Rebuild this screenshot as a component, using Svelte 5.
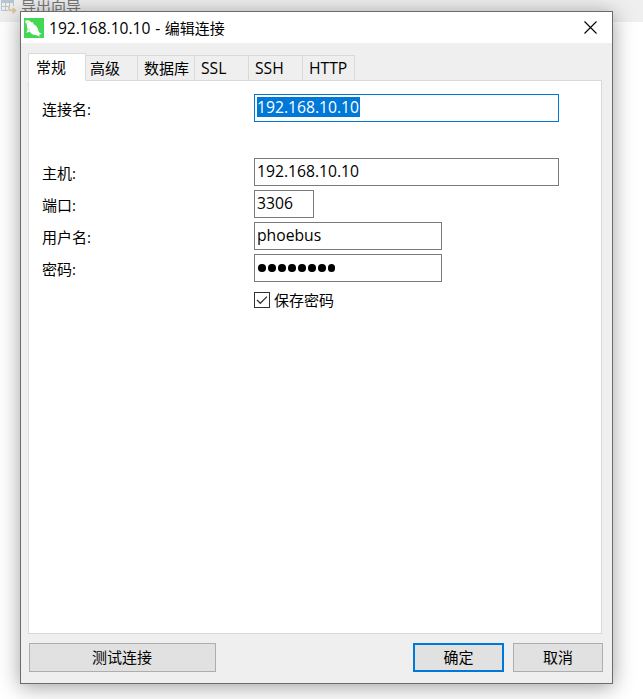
<script>
  const tabs = [
    { id: 'general', label: '常规', width: 58 },
    { id: 'advanced', label: '高级', width: 52 },
    { id: 'databases', label: '数据库', width: 57 },
    { id: 'ssl', label: 'SSL', width: 54, latin: true },
    { id: 'ssh', label: 'SSH', width: 54, latin: true },
    { id: 'http', label: 'HTTP', width: 52, latin: true }
  ];
  const host = '192.168.10.10';
  const passwordLength = 8;

  let active = 'general';
  let savePassword = true;
</script>

<div class="desktop">
  <div class="toolbar">
    <svg class="wizard-icon" width="17" height="14" viewBox="0 0 17 14">
      <rect x="1" y="0" width="13" height="2" fill="#b9c7d3" />
      <path d="M1.500 0v10.500h7M5.500 0v10.500M9.500 0v7M13.500 0v6M1 2.500h13M1 6.500h9" fill="none" stroke="#b5c4d0" />
      <path d="M9 6v2.500q0 2 3 2h2.500M12.500 8l2.800 2.500-2.800 2.500" fill="none" stroke="#dec39b" stroke-width="1.700" />
    </svg>
    <span>导出向导</span>
  </div>

  <div class="dialog" role="dialog" aria-label="编辑连接">
    <header>
      <svg class="logo" width="20" height="20" viewBox="0 0 20 20">
        <rect width="20" height="20" fill="#43d854" />
        <path
          d="M1.300 2.700C3 1.700 5.600 2.100 7.200 4.200l2.300.3-.4 1.300c2.800 1.500 4.700 3.800 5.300 6.700.1 1.300.8 2.200 3.400 3.400l-2.500.5.200 2.400c-1.300-1.200-2.600-1.700-4.200-1.800-2.500-.3-4.700-1.600-5.800-3.600L2.300 15l1.400-3.500C2.800 9.300 3.300 7.400 2.500 5.700L1.300 4.200z"
          fill="#fff"
        />
        <path d="M4.600 10.500l1.200 2.200M2.600 4.600l1.900.4" fill="none" stroke="#8be795" stroke-width=".7" />
      </svg>
      <h1><span class="host">{host} -</span> 编辑连接</h1>
      <button class="close" aria-label="关闭">
        <svg width="13" height="13" viewBox="0 0 13 13">
          <path d="M.5.500l12 12M12.500.500l-12 12" fill="none" stroke="#000" stroke-width="1.100" />
        </svg>
      </button>
    </header>

    <div class="tabs" role="tablist">
      {#each tabs as tab}
        <button
          class="tab"
          class:active={active === tab.id}
          class:latin={tab.latin}
          role="tab"
          aria-selected={active === tab.id}
          style="width: {tab.width}px"
          on:click={() => (active = tab.id)}
        >
          {tab.label}
        </button>
      {/each}
    </div>

    <main>
      <div class="row name">
        <span class="label">连接名:</span>
        <div class="field focused"><span class="selected">{host}</span></div>
      </div>
      <div class="row">
        <span class="label">主机:</span>
        <div class="field">{host}</div>
      </div>
      <div class="row">
        <span class="label">端口:</span>
        <div class="field port">3306</div>
      </div>
      <div class="row">
        <span class="label">用户名:</span>
        <div class="field medium">phoebus</div>
      </div>
      <div class="row">
        <span class="label">密码:</span>
        <div class="field medium password">
          {#each Array(passwordLength) as _}<i></i>{/each}
        </div>
      </div>
      <button
        class="save"
        role="checkbox"
        aria-checked={savePassword}
        on:click={() => (savePassword = !savePassword)}
      >
        <svg width="16" height="16" viewBox="0 0 16 16">
          <rect x=".5" y=".5" width="15" height="15" fill="#fff" stroke="#333" />
          {#if savePassword}
            <path d="M3 8l3.300 3.300L13 4.600" fill="none" stroke="#333" stroke-width="1.300" />
          {/if}
        </svg>
        <span>保存密码</span>
      </button>
    </main>

    <footer>
      <button class="btn test">测试连接</button>
      <button class="btn ok">确定</button>
      <button class="btn cancel">取消</button>
    </footer>
  </div>
</div>

<style>
  :global(body) {
    margin: 0;
    overflow: hidden;
  }
  .desktop {
    position: relative;
    width: 643px;
    height: 699px;
    overflow: hidden;
    background: #fff;
    color: #000;
    font-family: 'Open Sans', 'Noto Sans CJK SC', sans-serif;
    font-size: 15px;
  }
  button {
    margin: 0;
    padding: 0;
    border: none;
    background: none;
    color: inherit;
    font: inherit;
  }
  .toolbar {
    display: flex;
    height: 22px;
    background: #efefef;
    color: #777;
    line-height: 12px;
  }
  .wizard-icon {
    margin-right: 4px;
  }
  .dialog {
    position: absolute;
    left: 20px;
    top: 11px;
    box-sizing: border-box;
    width: 593px;
    height: 673px;
    display: flex;
    flex-direction: column;
    border: 1px solid #6b6b6b;
    background: #efefef;
    box-shadow: 0 3px 20px rgba(0, 0, 0, 0.38);
  }
  header {
    display: flex;
    align-items: center;
    height: 31px;
    padding: 0 15px 0 3px;
    background: #fff;
  }
  h1 {
    flex: 1;
    margin: 0 0 0 5px;
    font-size: 15px;
    font-weight: 400;
    line-height: 30px;
    word-spacing: 0.700px;
  }
  .host {
    font-size: 15.600px;
  }
  .close,
  .close svg {
    display: block;
  }
  .tabs {
    display: flex;
    align-items: flex-end;
    height: 38px;
    margin: 0 7px -1px;
    z-index: 1;
  }
  .tab {
    box-sizing: border-box;
    height: 26px;
    padding-left: 4px;
    border: 1px solid #d9d9d9;
    border-left: none;
    line-height: 25px;
    text-align: left;
  }
  .tab:nth-child(n + 3) {
    padding-left: 6px;
  }
  .tab.latin {
    font-size: 15.700px;
  }
  .tab.active {
    height: 28px;
    padding-left: 7px;
    border-left: 1px solid #d9d9d9;
    border-bottom-color: #fff;
    background: #fff;
    line-height: 22px;
  }
  main {
    box-sizing: border-box;
    height: 554px;
    margin: 0 10px 0 7px;
    padding: 13px 13px 0;
    border: 1px solid #d9d9d9;
    background: #fff;
  }
  .row {
    display: flex;
    height: 28px;
    margin-bottom: 4px;
  }
  .row.name {
    margin-bottom: 36px;
  }
  .label {
    width: 212px;
    line-height: 30px;
  }
  .field {
    box-sizing: border-box;
    width: 305px;
    padding-left: 2px;
    border: 1px solid #7a7a7a;
    font-size: 15.700px;
    line-height: 25px;
  }
  .focused {
    border-color: #0078d7;
  }
  .selected {
    display: block;
    width: 103px;
    height: 20px;
    margin-top: 2px;
    background: #0078d7;
    color: #fff;
    line-height: 21px;
  }
  .port {
    width: 60px;
  }
  .medium {
    width: 188px;
  }
  .password {
    display: flex;
    align-items: center;
    gap: 2.400px;
    padding-left: 3px;
  }
  .password i {
    width: 7.600px;
    height: 7.600px;
    border-radius: 50%;
    background: #000;
  }
  .save {
    display: flex;
    align-items: center;
    gap: 4px;
    height: 20px;
    margin: 8px 0 0 212px;
    line-height: 20px;
  }
  footer {
    display: flex;
    margin: 9px 9px 0 8px;
  }
  .btn {
    box-sizing: border-box;
    height: 29px;
    border: 1px solid #adadad;
    background: #e1e1e1;
    line-height: 27px;
  }
  .test {
    width: 187px;
    margin-right: auto;
    padding-right: 1px;
  }
  .ok {
    width: 91px;
    margin-right: 9px;
    border: 2px solid #0078d7;
    line-height: 25px;
  }
  .cancel {
    width: 90px;
  }
</style>
